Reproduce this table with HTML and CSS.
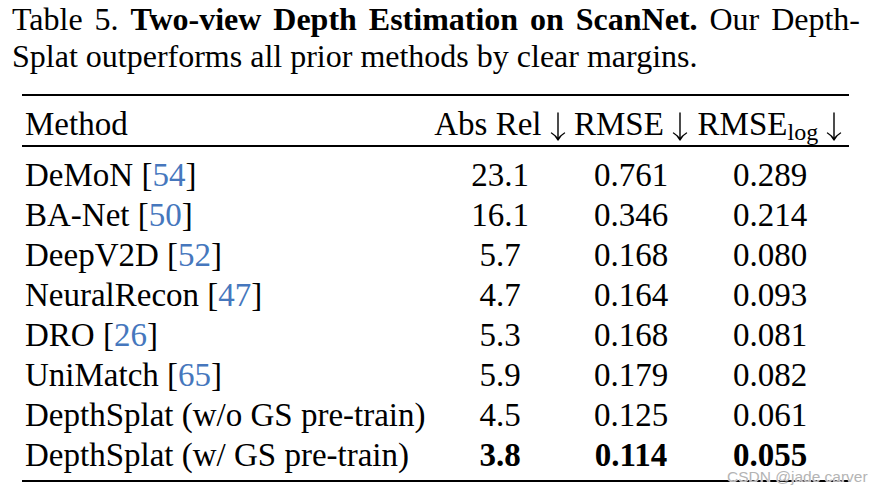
FILE: index.html
```html
<!DOCTYPE html>
<html lang="en">
<head>
<meta charset="utf-8">
<title>Table 5</title>
<link rel="stylesheet" href="styles.css">
</head>
<body>
<div class="page">
  <div class="caption">
    <div class="cap-line first">Table 5. <b>Two-view Depth Estimation on ScanNet.</b> Our Depth-</div>
    <div class="cap-line">Splat outperforms all prior methods by clear margins.</div>
  </div>
  <div class="table">
    <div class="row head">
      <div class="cell method">Method</div>
      <div class="cell">Abs Rel <svg class="arrow" viewBox="0 0 16 29" aria-label="↓"><path d="M8 1V27.5M1.5 21Q6 23.5 8 28Q10 23.5 14.5 21"/></svg></div>
      <div class="cell">RMSE <svg class="arrow" viewBox="0 0 16 29" aria-label="↓"><path d="M8 1V27.5M1.5 21Q6 23.5 8 28Q10 23.5 14.5 21"/></svg></div>
      <div class="cell">RMSE<sub class="sub">log</sub> <svg class="arrow" viewBox="0 0 16 29" aria-label="↓"><path d="M8 1V27.5M1.5 21Q6 23.5 8 28Q10 23.5 14.5 21"/></svg></div>
    </div>
    <div class="tbody">
      <div class="row">
        <div class="cell method">DeMoN [<span class="cite">54</span>]</div>
        <div class="cell">23.1</div><div class="cell">0.761</div><div class="cell">0.289</div>
      </div>
      <div class="row">
        <div class="cell method">BA-Net [<span class="cite">50</span>]</div>
        <div class="cell">16.1</div><div class="cell">0.346</div><div class="cell">0.214</div>
      </div>
      <div class="row">
        <div class="cell method">DeepV2D [<span class="cite">52</span>]</div>
        <div class="cell">5.7</div><div class="cell">0.168</div><div class="cell">0.080</div>
      </div>
      <div class="row">
        <div class="cell method">NeuralRecon [<span class="cite">47</span>]</div>
        <div class="cell">4.7</div><div class="cell">0.164</div><div class="cell">0.093</div>
      </div>
      <div class="row">
        <div class="cell method">DRO [<span class="cite">26</span>]</div>
        <div class="cell">5.3</div><div class="cell">0.168</div><div class="cell">0.081</div>
      </div>
      <div class="row">
        <div class="cell method">UniMatch [<span class="cite">65</span>]</div>
        <div class="cell">5.9</div><div class="cell">0.179</div><div class="cell">0.082</div>
      </div>
      <div class="row">
        <div class="cell method">DepthSplat (w/o GS pre-train)</div>
        <div class="cell">4.5</div><div class="cell">0.125</div><div class="cell">0.061</div>
      </div>
      <div class="row">
        <div class="cell method">DepthSplat (w/ GS pre-train)</div>
        <div class="cell best">3.8</div><div class="cell best">0.114</div><div class="cell best">0.055</div>
      </div>
    </div>
  </div>
  <div class="watermark">CSDN @jade carver</div>
</div>
</body>
</html>
```

FILE: styles.css
```css
html, body {
  margin: 0;
  padding: 0;
  background: #ffffff;
}

.page {
  position: relative;
  width: 874px;
  height: 494px;
  overflow: hidden;
  font-family: "Liberation Serif", "Times New Roman", serif;
  color: #000;
}

.caption {
  margin-left: 12px;
  width: 848px;
  padding-top: 1px;
  font-size: 32px;
  line-height: 37px;
}

.cap-line {
  white-space: nowrap;
}

.cap-line.first {
  text-align: justify;
  text-align-last: justify;
}

.table {
  margin-top: 19px;
  margin-left: 22px;
  width: 827px;
  border-top: 2px solid #000;
  border-bottom: 2px solid #000;
  font-size: 33px;
}

.row {
  display: grid;
  grid-template-columns: 411px 134px 128px 150px;
  height: 40px;
  line-height: 40px;
  white-space: nowrap;
}

.row.head {
  margin-top: 8px;
  padding-bottom: 1px;
  border-bottom: 2px solid #000;
}

.tbody {
  padding-top: 8px;
  padding-bottom: 5px;
}

.cell {
  text-align: center;
}

.cell.method {
  text-align: left;
  padding-left: 3px;
}

.cite {
  color: #4677bd;
}

.best {
  font-weight: bold;
}

.sub {
  font-size: 24px;
  line-height: 0;
  vertical-align: -5px;
}

.arrow {
  display: inline-block;
  width: 16px;
  height: 29px;
  vertical-align: -6px;
  fill: none;
  stroke: #000;
  stroke-width: 1.4;
  stroke-linecap: round;
  stroke-linejoin: round;
}

.watermark {
  position: absolute;
  left: 727px;
  top: 468px;
  font-family: "Liberation Sans", Arial, sans-serif;
  font-size: 15.5px;
  line-height: 18px;
  color: #b4b4b4;
  text-shadow: 0 0 1px #fff, 0 0 1px #fff;
  white-space: nowrap;
}
```
